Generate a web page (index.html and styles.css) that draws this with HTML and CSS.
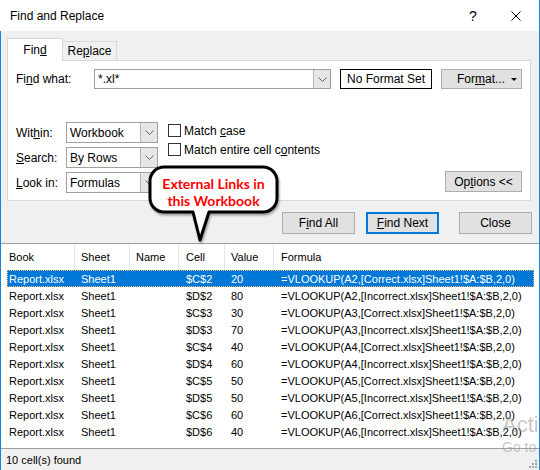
FILE: index.html
```html
<!DOCTYPE html>
<html>
<head>
<meta charset="utf-8">
<title>Find and Replace</title>
<link rel="stylesheet" href="styles.css">
</head>
<body>
<div class="window">
  <div class="titlebar">
    <span class="title">Find and Replace</span>
    <span class="help">?</span>
    <svg class="close" width="10" height="10" viewBox="0 0 10 10"><path d="M0.5 0.5 L9.5 9.5 M9.5 0.5 L0.5 9.5" stroke="#000" stroke-width="1" fill="none"/></svg>
  </div>
  <div class="main">
    <div class="top">
      <div class="tabs">
        <div class="tab active"><span>Fin<u>d</u></span></div>
        <div class="tab"><span>Re<u>p</u>lace</span></div>
      </div>
      <div class="panel">
        <div class="find-row">
          <div class="find-label">Fi<u>n</u>d what:</div>
          <div class="combo find-combo">
            <span class="combo-text">*.xl*</span>
            <span class="combo-btn"><svg width="9" height="5" viewBox="0 0 9 5"><path d="M0.5 0.5 L4.5 4.5 L8.5 0.5" stroke="#606060" fill="none"/></svg></span>
          </div>
          <div class="noformat">No Format Set</div>
          <div class="btn format-btn"><span>For<u>m</u>at...</span><span class="caret"></span></div>
        </div>
        <div class="opts">
          <div class="selects">
            <div class="sel-row">
              <div class="sel-label">Wit<u>h</u>in:</div>
              <div class="combo sel">
                <span class="combo-text">Workbook</span>
                <span class="combo-btn"><svg width="9" height="5" viewBox="0 0 9 5"><path d="M0.5 0.5 L4.5 4.5 L8.5 0.5" stroke="#606060" fill="none"/></svg></span>
              </div>
            </div>
            <div class="sel-row">
              <div class="sel-label"><u>S</u>earch:</div>
              <div class="combo sel">
                <span class="combo-text">By Rows</span>
                <span class="combo-btn"><svg width="9" height="5" viewBox="0 0 9 5"><path d="M0.5 0.5 L4.5 4.5 L8.5 0.5" stroke="#606060" fill="none"/></svg></span>
              </div>
            </div>
            <div class="sel-row">
              <div class="sel-label"><u>L</u>ook in:</div>
              <div class="combo sel">
                <span class="combo-text">Formulas</span>
                <span class="combo-btn"><svg width="9" height="5" viewBox="0 0 9 5"><path d="M0.5 0.5 L4.5 4.5 L8.5 0.5" stroke="#606060" fill="none"/></svg></span>
              </div>
            </div>
          </div>
          <div class="checks">
            <div class="check"><span class="box"></span><span>Match <u>c</u>ase</span></div>
            <div class="check"><span class="box"></span><span>Match entire cell c<u>o</u>ntents</span></div>
          </div>
          <div class="btn options-btn"><span>Op<u>t</u>ions &lt;&lt;</span></div>
        </div>
      </div>
      <div class="actions">
        <div class="btn action"><span>F<u>i</u>nd All</span></div>
        <div class="btn action primary"><span><u>F</u>ind Next</span></div>
        <div class="btn action close-btn">Close</div>
      </div>
    </div>
    <div class="list">
      <div class="list-head">
        <div class="hc hc1">Book</div>
        <div class="hc">Sheet</div>
        <div class="hc">Name</div>
        <div class="hc hc7">Cell</div>
        <div class="hc">Value</div>
        <div class="hc hc7 last">Formula</div>
      </div>
      <div class="row selected"><span>Report.xlsx</span><span>Sheet1</span><span></span><span>$C$2</span><span>20</span><span>=VLOOKUP(A2,[Correct.xlsx]Sheet1!$A:$B,2,0)</span></div>
      <div class="row"><span>Report.xlsx</span><span>Sheet1</span><span></span><span>$D$2</span><span>80</span><span>=VLOOKUP(A2,[Incorrect.xlsx]Sheet1!$A:$B,2,0)</span></div>
      <div class="row"><span>Report.xlsx</span><span>Sheet1</span><span></span><span>$C$3</span><span>30</span><span>=VLOOKUP(A3,[Correct.xlsx]Sheet1!$A:$B,2,0)</span></div>
      <div class="row"><span>Report.xlsx</span><span>Sheet1</span><span></span><span>$D$3</span><span>70</span><span>=VLOOKUP(A3,[Incorrect.xlsx]Sheet1!$A:$B,2,0)</span></div>
      <div class="row"><span>Report.xlsx</span><span>Sheet1</span><span></span><span>$C$4</span><span>40</span><span>=VLOOKUP(A4,[Correct.xlsx]Sheet1!$A:$B,2,0)</span></div>
      <div class="row"><span>Report.xlsx</span><span>Sheet1</span><span></span><span>$D$4</span><span>60</span><span>=VLOOKUP(A4,[Incorrect.xlsx]Sheet1!$A:$B,2,0)</span></div>
      <div class="row"><span>Report.xlsx</span><span>Sheet1</span><span></span><span>$C$5</span><span>50</span><span>=VLOOKUP(A5,[Correct.xlsx]Sheet1!$A:$B,2,0)</span></div>
      <div class="row"><span>Report.xlsx</span><span>Sheet1</span><span></span><span>$D$5</span><span>50</span><span>=VLOOKUP(A5,[Incorrect.xlsx]Sheet1!$A:$B,2,0)</span></div>
      <div class="row"><span>Report.xlsx</span><span>Sheet1</span><span></span><span>$C$6</span><span>60</span><span>=VLOOKUP(A6,[Correct.xlsx]Sheet1!$A:$B,2,0)</span></div>
      <div class="row"><span>Report.xlsx</span><span>Sheet1</span><span></span><span>$D$6</span><span>40</span><span>=VLOOKUP(A6,[Incorrect.xlsx]Sheet1!$A:$B,2,0)</span></div>
    </div>
    <div class="status">
      <span>10 cell(s) found</span>
      <svg class="grip" width="10" height="10" viewBox="0 0 10 10">
        <rect x="7" y="1" width="2" height="2" fill="#a8a8a8"/>
        <rect x="4" y="4" width="2" height="2" fill="#a8a8a8"/>
        <rect x="7" y="4" width="2" height="2" fill="#a8a8a8"/>
        <rect x="1" y="7" width="2" height="2" fill="#a8a8a8"/>
        <rect x="4" y="7" width="2" height="2" fill="#a8a8a8"/>
        <rect x="7" y="7" width="2" height="2" fill="#a8a8a8"/>
      </svg>
    </div>
  </div>

  <svg class="callout" width="137" height="82" viewBox="0 0 137 82">
    <path d="M19 4 H118 A14 14 0 0 1 132 18 V35 A14 14 0 0 1 118 49 H64 L55 77 L48 49 H19 A14 14 0 0 1 5 35 V18 A14 14 0 0 1 19 4 Z" fill="#fff" stroke="#000" stroke-width="3" stroke-linejoin="round"/>
  </svg>
  <div class="callout-text">External Links in<br>this Workbook</div>

  <div class="wm wm1">Acti</div>
  <div class="wm wm2">Go to</div>
</div>
</body>
</html>
```

FILE: styles.css
```css
* { box-sizing: border-box; }
html, body { margin: 0; padding: 0; }
body {
  width: 540px;
  height: 470px;
  overflow: hidden;
  font-family: "Liberation Sans", Arial, sans-serif;
  font-size: 12px;
  color: #000;
  background: #fff;
}
u { text-decoration: underline; text-underline-offset: 1px; }

.window {
  position: relative;
  width: 540px;
  height: 470px;
  display: flex;
  flex-direction: column;
  border-right: 1px solid #1883d7;
  overflow: hidden;
}

/* title bar */
.titlebar {
  height: 31px;
  flex: none;
  display: flex;
  align-items: center;
  padding-left: 10px;
  background: #fff;
}
.title { font-size: 12px; }
.help { margin-left: auto; font-size: 14px; width: 6px; margin-right: 36px; }
.close { margin-right: 18px; }

.main {
  flex: 1;
  display: flex;
  flex-direction: column;
  border-left: 1px solid #1883d7;
  background: #f0f0f0;
  min-height: 0;
}

.top { flex: none; padding: 7px 8px 9px 6px; }

/* tabs */
.tabs { display: flex; height: 22px; }
.tab {
  width: 54px;
  height: 19px;
  margin-top: 3px;
  border-top: 1px solid #d9d9d9;
  border-right: 1px solid #d9d9d9;
  background: #f0f0f0;
  display: flex;
  align-items: center;
  justify-content: center;
}
.tab.active {
  position: relative;
  z-index: 1;
  width: 56px;
  height: 23px;
  margin-top: 0;
  border-left: 1px solid #d9d9d9;
  background: #fff;
}

/* panel */
.panel {
  height: 141px;
  background: #fff;
  border: 1px solid #d9d9d9;
  padding: 8px 8px 7px 8px;
  display: flex;
  flex-direction: column;
}
.find-row { display: flex; align-items: center; height: 20px; }
.find-label { width: 78px; }

.combo {
  display: flex;
  background: #fff;
  border: 1px solid #a0a0a0;
}
.combo-text { flex: 1; padding-left: 3px; display: flex; align-items: center; }
.combo-btn {
  width: 17px;
  background: #e6e6e6;
  border-left: 1px solid #b4b4b4;
  display: flex;
  align-items: center;
  justify-content: center;
}
.find-combo { width: 237px; height: 20px; }
.noformat {
  width: 92px;
  height: 20px;
  margin-left: 9px;
  border: 1px solid #000;
  display: flex;
  align-items: center;
  justify-content: center;
}
.btn {
  background: #e1e1e1;
  border: 1px solid #adadad;
  display: flex;
  align-items: center;
  justify-content: center;
  white-space: nowrap;
}
.format-btn {
  width: 81px;
  height: 20px;
  margin-left: 9px;
  justify-content: flex-start;
  padding-left: 15px;
}
.caret {
  margin-left: 6px;
  width: 0;
  height: 0;
  border-left: 3px solid transparent;
  border-right: 3px solid transparent;
  border-top: 3px solid #000;
}

.opts { display: flex; margin-top: 33px; height: 71px; }
.selects { display: flex; flex-direction: column; gap: 4px; }
.sel-row { display: flex; align-items: center; height: 21px; }
.sel-label { width: 50px; }
.sel { width: 92px; height: 21px; }

.checks { margin-left: 10px; margin-top: -1px; display: flex; flex-direction: column; }
.check { height: 19px; display: flex; align-items: center; white-space: nowrap; }
.box {
  width: 13px;
  height: 13px;
  border: 1px solid #333;
  background: #fff;
  margin-right: 3px;
  flex: none;
}
.options-btn {
  margin-left: auto;
  align-self: flex-end;
  width: 77px;
  height: 21px;
  margin-bottom: 1px;
}

/* action buttons */
.actions {
  display: flex;
  justify-content: flex-end;
  margin-top: 11px;
  margin-right: -1px;
  height: 22px;
}
.action { width: 73px; height: 22px; }
.primary { margin-left: 11px; border: 2px solid #0078d7; }
.close-btn { margin-left: 20px; }

/* results list */
.list {
  flex: 1;
  background: #fff;
  border-top: 1px solid #a0a0a0;
  padding: 0 5px 0 6px;
  font-size: 11px;
}
.list-head {
  display: grid;
  grid-template-columns: 68px 55px 49px 46px 49px 1fr;
  height: 26px;
}
.hc {
  display: flex;
  align-items: center;
  padding-left: 6px;
  border-right: 1px solid #e5e5e5;
}
.hc1 { padding-left: 2px; }
.hc7 { padding-left: 7px; }
.hc.last { border-right: none; }

.row {
  display: grid;
  grid-template-columns: 72px 55px 50px 45px 50px 1fr;
  height: 17px;
  align-items: center;
}
.row span { padding-left: 2px; white-space: nowrap; }
.row.selected {
  background: #0078d7;
  color: #fff;
  outline: 1px dotted #f2b36a;
  outline-offset: -1px;
}

/* status bar */
.status {
  flex: none;
  height: 22px;
  border-top: 1px solid #a0a0a0;
  display: flex;
  align-items: center;
  padding-left: 5px;
  font-size: 11px;
}
.grip { margin-left: auto; align-self: flex-end; margin-right: 1px; margin-bottom: 1px; }

/* callout overlay */
.callout {
  position: absolute;
  left: 145px;
  top: 163px;
  filter: drop-shadow(1px 2px 1px rgba(0, 0, 0, 0.35));
}
.callout-text {
  position: absolute;
  left: 150px;
  top: 175px;
  width: 127px;
  text-align: center;
  font-family: Lato, "Liberation Sans", sans-serif;
  font-weight: 700;
  font-size: 14px;
  line-height: 17px;
  color: #ff0000;
}

/* windows activation watermark */
.wm {
  position: absolute;
  left: 502px;
  white-space: nowrap;
  color: rgba(150, 150, 150, 0.55);
  font-family: "Liberation Sans", Arial, sans-serif;
}
.wm1 { top: 414px; font-size: 22px; line-height: 22px; }
.wm2 { top: 440px; font-size: 14px; line-height: 14px; }
```
